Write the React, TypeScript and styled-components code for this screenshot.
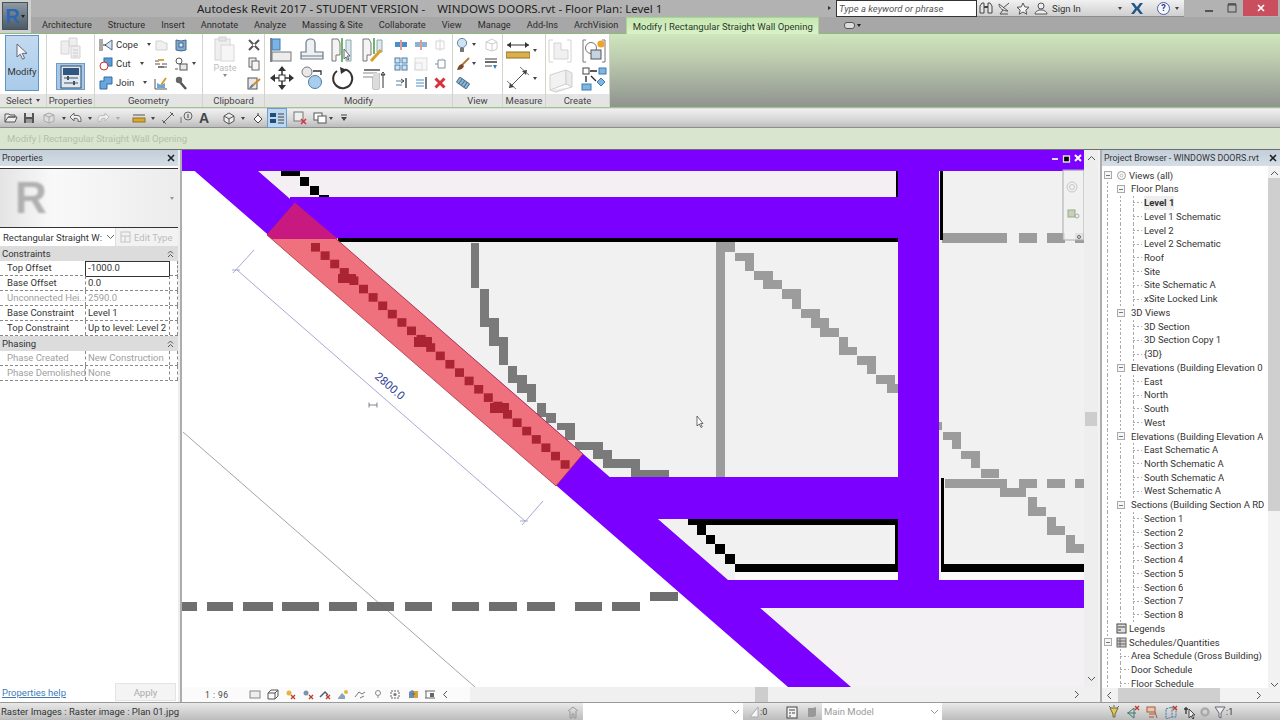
import React, { ReactNode } from "react";
import styled, { createGlobalStyle } from "styled-components";

const FONT = `Roboto, "Liberation Sans", sans-serif`;

const GlobalStyle = createGlobalStyle`
    html, body {
        margin: 0;
        padding: 0;
        background: #fff;
    }
    * { box-sizing: border-box; }
`;

const SvgBase = styled.svg`
    display: block;
    flex: none;
`;

const I = ({ w = 14, h = 14, children }: { w?: number; h?: number; children: ReactNode }) => (
    <SvgBase width={w} height={h} viewBox={`0 0 ${w} ${h}`} fill="none">
        {children}
    </SvgBase>
);

// ribbon icons
const IcoCursor = () => (
    <I w={14} h={18}><path d="M2 1v13l3.2-2.8 2.4 5 2-1-2.4-4.8H12z" fill="#f4f6f8" stroke="#667" /></I>
);
const IcoTypeFaded = () => (
    <I w={24} h={24}>
        <path d="M2 5h8v13H2zM10 2h8v8h-8zM12 10h9v12h-9z" fill="#eee" stroke="#d4d4d4" />
        <path d="M14 14h5M14 17h5M14 20h5" stroke="#ccc" />
    </I>
);
const IcoTypeProps = () => (
    <I w={22} h={24}>
        <rect x="1" y="1" width="20" height="22" fill="#dfe8f0" stroke="#2c4a66" />
        <rect x="3" y="3" width="16" height="7" fill="#31577f" />
        <path d="M4 13h14M4 18h14" stroke="#44525e" />
        <path d="M8 11v4M14 16v4" stroke="#44525e" strokeWidth="2" />
    </I>
);
const IcoCope = () => (
    <I w={14} h={14}>
        <path d="M1 1v12M3 1v12" stroke="#555" />
        <path d="M6 7l7-5v10z" fill="#dbe4ee" stroke="#4a6a8a" />
        <path d="M4 7h3" stroke="#333" />
    </I>
);
const IcoCut = () => (
    <I w={14} h={14}>
        <rect x="5" y="1" width="8" height="8" fill="#5c9bd6" stroke="#2f6da8" />
        <circle cx="5" cy="9" r="4" fill="#fff" stroke="#c0392b" />
    </I>
);
const IcoJoin = () => (
    <I w={14} h={14}>
        <path d="M5 1h8v7H8v5H1V5h4z" fill="#6aa5dd" stroke="#2f6da8" />
    </I>
);
const IcoFadedDoc = () => (
    <I w={14} h={14}><path d="M2 3h6l2 2h3v7H2z" fill="#f0f0f0" stroke="#d0d0d0" /></I>
);
const IcoBlueBook = () => (
    <I w={14} h={14}>
        <path d="M2 2l5 1 5-1v10l-5 1-5-1z" fill="#7fa9cf" stroke="#44688c" />
        <rect x="5" y="5" width="4" height="4" fill="#dde8f2" stroke="#44688c" />
    </I>
);
const IcoSplit = () => (
    <I w={14} h={14}>
        <path d="M1 4h4M1 7h5M8 7h5M9 10h4" stroke="#555" />
        <rect x="4" y="2" width="6" height="2" fill="#d4a83a" />
        <rect x="4" y="9" width="6" height="2" fill="#7a7a7a" />
    </I>
);
const IcoGeomPair = () => (
    <I w={14} h={14}>
        <circle cx="5" cy="4" r="3" stroke="#555" />
        <rect x="6" y="7" width="7" height="6" stroke="#555" fill="#e9e9e9" />
        <path d="M1 12h3" stroke="#555" />
    </I>
);
const IcoPaint = () => (
    <I w={14} h={14}>
        <path d="M1 13V3M1 13h12" stroke="#555" />
        <path d="M3 12V7l4 2 4-2v5z" fill="#6aa5dd" />
        <path d="M7 9l5-7" stroke="#d89a28" strokeWidth="2" />
    </I>
);
const IcoWand = () => (
    <I w={14} h={14}>
        <path d="M6 6l6 7" stroke="#555" strokeWidth="2.5" />
        <circle cx="5" cy="4" r="3.2" fill="#666" />
    </I>
);
const IcoClipFaded = () => (
    <I w={22} h={26}>
        <rect x="1" y="3" width="15" height="21" fill="#efefef" stroke="#d4d4d4" />
        <rect x="7" y="9" width="13" height="16" fill="#f6f6f6" stroke="#d8d8d8" />
        <rect x="5" y="1" width="7" height="4" fill="#e4e4e4" stroke="#d4d4d4" />
    </I>
);
const IcoScissors = () => (
    <I w={14} h={14}>
        <path d="M2 2l10 10M12 2L2 12" stroke="#555" strokeWidth="2" />
        <circle cx="7" cy="7" r="1.3" fill="#fff" />
    </I>
);
const IcoCopy = () => (
    <I w={14} h={14}>
        <rect x="2" y="1" width="7" height="9" fill="#eee" stroke="#666" />
        <rect x="5" y="4" width="7" height="9" fill="#f5f5f5" stroke="#666" />
    </I>
);
const IcoMatch = () => (
    <I w={14} h={14}>
        <rect x="1" y="2" width="9" height="11" fill="#e8e8e8" stroke="#555" />
        <path d="M5 10l8-7" stroke="#d18a23" strokeWidth="2" />
        <path d="M3 12l3-3" stroke="#5c7fa3" strokeWidth="2" />
    </I>
);
const IcoAlign = () => (
    <I w={24} h={26}>
        <path d="M2 1v24" stroke="#555" strokeWidth="1.4" />
        <rect x="3" y="2" width="8" height="11" fill="#7db3e3" stroke="#3f78b3" />
        <rect x="3" y="15" width="19" height="9" fill="#ececec" stroke="#777" />
    </I>
);
const IcoOffset = () => (
    <I w={24} h={24}>
        <path d="M1 21v-7h5V5a4 4 0 0 1 4-4h1a4 4 0 0 1 4 4v9h8v7z" stroke="#6f7b86" strokeWidth="1.2" fill="#edf1f4" />
        <path d="M1 18h22" stroke="#6f7b86" />
    </I>
);
const IcoMirrorPick = () => (
    <I w={22} h={26}>
        <path d="M1 2h6l2 4v12H5v6H1z" fill="#f4f4f4" stroke="#777" />
        <path d="M11 1v24" stroke="#4ba24b" strokeWidth="1.6" />
        <path d="M20 3h-5v21h5z" fill="#dfe7ef" stroke="#8aa" />
        <path d="M13 12v10l2-2 2 3 1-1-2-3h3z" fill="#fff" stroke="#667" />
    </I>
);
const IcoMirrorDraw = () => (
    <I w={22} h={26}>
        <path d="M1 2h6l2 4v12H5v6H1z" fill="#f4f4f4" stroke="#777" />
        <path d="M12 1v16" stroke="#4ba24b" strokeWidth="1.6" />
        <path d="M20 3h-5v12h5z" fill="#dfe7ef" stroke="#8aa" />
        <path d="M9 24l10-11" stroke="#d6a02a" strokeWidth="3" />
    </I>
);
const IcoMove = () => (
    <I w={26} h={26}>
        <path d="M13 1l4 5h-8zM13 25l4-5H9zM1 13l5-4v8zM25 13l-5-4v8z" fill="#333" />
        <path d="M13 6v14M6 13h14" stroke="#333" strokeWidth="1.5" />
        <rect x="10" y="10" width="6" height="6" fill="#fff" stroke="#333" />
    </I>
);
const IcoCopyMove = () => (
    <I w={24} h={24}>
        <circle cx="7" cy="6" r="5" fill="#e8e8e8" stroke="#777" />
        <circle cx="15" cy="16" r="6.5" fill="#a9cdec" stroke="#4a7ea8" />
        <path d="M13 5h8v4" stroke="#333" strokeWidth="1.3" />
    </I>
);
const IcoRotate = () => (
    <I w={24} h={24}>
        <path d="M14 3.4A9.5 9.5 0 1 1 6 5" stroke="#333" strokeWidth="2" />
        <path d="M9 1l7 3-6 4z" fill="#333" />
    </I>
);
const IcoTrim = () => (
    <I w={24} h={24}>
        <path d="M1 7h14M1 11h10v12h6V7" stroke="#8a8a8a" />
        <rect x="11" y="7" width="6" height="16" fill="#dcdcdc" />
        <path d="M2 4h16" stroke="#333" strokeWidth="1.3" />
        <path d="M21 22V8M21 6l-2 3h4z" stroke="#333" />
    </I>
);
const IcoTwin = ({ $c = "#4a90c8" }: { $c?: string }) => (
    <I w={14} h={14}>
        <path d="M7 2v10" stroke="#c0392b" />
        <rect x="1" y="4" width="5" height="5" fill={$c} />
        <rect x="8" y="4" width="5" height="5" fill={$c} />
    </I>
);
const IcoArray = () => (
    <I w={14} h={14}>
        <rect x="1" y="1" width="5" height="5" stroke="#4a7ea8" fill="#cfe2f3" />
        <rect x="8" y="1" width="5" height="5" stroke="#4a7ea8" fill="#cfe2f3" />
        <rect x="1" y="8" width="5" height="5" stroke="#4a7ea8" fill="#cfe2f3" />
        <rect x="8" y="8" width="5" height="5" stroke="#4a7ea8" fill="#cfe2f3" />
    </I>
);
const IcoScale = () => (
    <I w={14} h={14}>
        <rect x="1" y="1" width="12" height="12" stroke="#ddd" fill="#f7f7f7" />
        <rect x="1" y="6" width="7" height="7" stroke="#ddd" />
    </I>
);
const IcoTrimSmall = () => (
    <I w={14} h={14}>
        <path d="M12 2v10" stroke="#444" strokeWidth="1.4" />
        <path d="M2 5h8M2 9h6" stroke="#5a7f99" />
        <path d="M7 3l3 2-3 2" stroke="#444" />
    </I>
);
const IcoExtend = () => (
    <I w={14} h={14}>
        <path d="M12 1v12" stroke="#444" strokeWidth="1.4" />
        <path d="M2 4h8M2 7h8M2 10h8" stroke="#4a90c8" />
    </I>
);
const IcoUnpin = () => (
    <I w={14} h={14}>
        <path d="M2 7h3M5 3h7v8H5z" stroke="#7f8f9f" />
        <path d="M9 1v3" stroke="#ccc" />
    </I>
);
const IcoRedX = () => (
    <I w={14} h={14}><path d="M2.5 2.5l9 9M11.5 2.5l-9 9" stroke="#d6333f" strokeWidth="3" /></I>
);
const IcoFadedCross = () => (
    <I w={14} h={14}><path d="M3 3h8v8H3zM7 1v12" stroke="#d6d6d6" /></I>
);
const IcoBulb = () => (
    <I w={12} h={16}>
        <circle cx="6" cy="6" r="4.6" fill="#cfe2f3" stroke="#5f87a8" />
        <rect x="4" y="11" width="4" height="4" fill="#777" />
    </I>
);
const IcoBox3d = () => (
    <I w={14} h={14}><path d="M2 4l6-3 5 3v7l-5 2-6-2zM8 6v7M2 4l6 2 5-2" stroke="#ccc" /></I>
);
const IcoBrush = () => (
    <I w={14} h={14}>
        <path d="M6 8l7-7" stroke="#b37a3a" strokeWidth="2" />
        <path d="M1 13c1-4 3-6 5-6l2 2c-1 3-4 4-7 4z" fill="#7c4a2a" />
    </I>
);
const IcoLines = () => (
    <I w={14} h={14}>
        <path d="M1 2h12" stroke="#444" />
        <path d="M1 5h12" stroke="#444" strokeWidth="1.6" />
        <path d="M1 9h7" stroke="#444" />
        <path d="M9 8h4l-2 4z" fill="#2f7ec0" />
    </I>
);
const IcoBars = () => (
    <I w={14} h={14}>
        <g transform="rotate(35 7 7)">
            <rect x="1" y="4" width="12" height="6" rx="1" fill="#8cb8d9" stroke="#4b6f8c" />
            <path d="M4 4v6M7 4v6M10 4v6" stroke="#4b6f8c" />
        </g>
    </I>
);
const IcoRuler = () => (
    <I w={24} h={22}>
        <path d="M1 6h22" stroke="#333" />
        <path d="M1 6l4-3v6zM23 6l-4-3v6z" fill="#333" />
        <rect x="0" y="13" width="24" height="6" fill="#d9b04d" stroke="#8f7326" />
    </I>
);
const IcoDimDiag = () => (
    <I w={24} h={24}>
        <path d="M3 22L21 4" stroke="#555" />
        <path d="M14 1l9 8M1 15l9 8" stroke="#777" />
        <path d="M21 4l-5 1 4 4zM3 22l1-5 4 4z" fill="#444" />
    </I>
);
const IcoCreateFaded = () => (
    <I w={24} h={24}>
        <path d="M5 1H1v22h4M19 1h4v22h-4" stroke="#d4d4d4" />
        <path d="M6 4h7v7h7v9H6z" fill="#f0f0f0" stroke="#d4d4d4" />
    </I>
);
const IcoCreateGroup = () => (
    <I w={26} h={26}>
        <path d="M5 2H2v22h3M21 2h3v22h-3" stroke="#777" />
        <circle cx="10" cy="10" r="5.5" stroke="#777" fill="#fff" />
        <rect x="10" y="12" width="10" height="9" fill="#c4d4e2" stroke="#555" />
        <circle cx="20" cy="6" r="3.6" fill="#eea32a" />
    </I>
);
const IcoFolderBox = () => (
    <I w={26} h={26}>
        <path d="M2 8l16-5v14L2 23z" fill="#f2f2f2" stroke="#d0d0d0" />
        <path d="M18 3l6 3v14l-6-3zM2 23l6 2 16-5" fill="#eaeaea" stroke="#d0d0d0" />
    </I>
);
const IcoFlow = () => (
    <I w={26} h={26}>
        <rect x="2" y="1" width="6" height="6" fill="#fff" stroke="#444" />
        <rect x="18" y="1" width="7" height="6" fill="#7fb6de" stroke="#3f78b3" />
        <path d="M9 4h7M5 9v6M10 9l5 5" stroke="#222" strokeWidth="1.3" />
        <rect x="1" y="17" width="9" height="6" fill="#7fb6de" stroke="#3f78b3" />
        <path d="M20 11l4 4-4 4-4-4z" fill="#7fb6de" stroke="#3f78b3" />
    </I>
);

// quick access icons
const IcoOpen = () => (
    <I w={14} h={12}><path d="M1 10V2h4l1 1h5v2H4l-3 5h10l2-5H4" stroke="#555" fill="#eee" /></I>
);
const IcoSave = () => (
    <I w={12} h={12}>
        <rect x="1" y="1" width="10" height="10" fill="#555" />
        <rect x="3" y="1" width="6" height="4" fill="#ddd" />
        <rect x="3" y="7" width="6" height="4" fill="#999" />
    </I>
);
const IcoSync = () => (
    <I w={14} h={12}><path d="M2 3l5-2 5 2v6l-5 2-5-2zM2 3l5 2 5-2M7 5v6" stroke="#aaa" fill="#ddd" /></I>
);
const IcoUndo = ({ $c = "#666", flip = false }: { $c?: string; flip?: boolean }) => (
    <I w={14} h={12}>
        <g transform={flip ? "matrix(-1 0 0 1 14 0)" : undefined}>
            <path d="M2 5l4-4v2.4h3c3 0 4 2 4 5v1h-3V8c0-1-.5-1.6-2-1.6H6V9z" stroke={$c} fill="#eee" />
        </g>
    </I>
);
const IcoMeasureBar = () => (
    <I w={14} h={12}>
        <path d="M1 3h12" stroke="#555" />
        <rect x="1" y="6" width="12" height="4" fill="#d9a92a" stroke="#8f7326" />
    </I>
);
const IcoDimSmall = () => (
    <I w={14} h={14}><path d="M2 12L12 2" stroke="#555" /><path d="M9 1l4 4M1 9l4 4" stroke="#666" /></I>
);
const IcoTag = () => (
    <I w={14} h={14}>
        <path d="M2 12V6" stroke="#777" />
        <circle cx="9" cy="5" r="4" stroke="#666" />
        <path d="M9 3v4" stroke="#444" />
    </I>
);
const IcoCube = () => (
    <I w={14} h={13}><path d="M7 1l5 3v5l-5 3-5-3V4zM2 4l5 3 5-3M7 7v5" stroke="#555" fill="#f0f0f0" /></I>
);
const IcoDiamond = () => (
    <I w={14} h={13}><path d="M7 3l4 4-4 4-4-4z" stroke="#444" fill="#fff" /><path d="M7 1v3" stroke="#444" /></I>
);
const IcoSwitch = () => (
    <I w={16} h={13}>
        <rect x="1" y="1" width="6" height="4" fill="#1f4e79" />
        <rect x="1" y="7" width="6" height="4" fill="#1f4e79" />
        <path d="M9 2h6M9 5h6M9 8h6M9 11h6" stroke="#444" />
    </I>
);
const IcoCloseWin = () => (
    <I w={14} h={14}>
        <rect x="1" y="1" width="9" height="9" stroke="#777" fill="#eee" />
        <path d="M8 8l5 5M13 8l-5 5" stroke="#d6333f" strokeWidth="1.5" />
    </I>
);
const IcoTileWin = () => (
    <I w={14} h={12}>
        <rect x="1" y="1" width="8" height="7" stroke="#555" fill="#fff" />
        <rect x="5" y="4" width="8" height="7" stroke="#555" fill="#fff" />
    </I>
);
const IcoQatMenu = () => (
    <I w={8} h={10}><path d="M1 2h6" stroke="#444" /><path d="M1 4h6l-3 4z" fill="#444" /></I>
);

// info center icons
const IcoBinoc = () => (
    <I w={14} h={13}>
        <path d="M1 11V4l2-3h2v10zM13 11V4l-2-3H9v10z" fill="#e6e6e6" stroke="#444" />
        <path d="M5 5h4" stroke="#444" strokeWidth="2" />
    </I>
);
const IcoDish = () => (
    <I w={14} h={13}>
        <path d="M2 2c0 4 4 7 9 7z" fill="#eee" stroke="#555" />
        <path d="M6 8l-3 4h8M6 6l6-5" stroke="#555" />
    </I>
);
const IcoStar = () => (
    <I w={14} h={13}><path d="M7 1l1.8 3.9 4.2.4-3.2 2.8 1 4.1L7 10l-3.8 2.2 1-4.1L1 5.3l4.2-.4z" stroke="#555" fill="#f5f5f5" /></I>
);
const IcoUser = () => (
    <I w={14} h={13}>
        <circle cx="7" cy="4" r="3" stroke="#555" fill="#eee" />
        <path d="M1 12h12c0-2-2-3-4-4H5c-2 1-4 2-4 4z" stroke="#555" fill="#eee" />
    </I>
);
const IcoExchange = () => (
    <I w={14} h={13}>
        <path d="M1 1h3l3 4 3-4h3L9 6.5 13 12h-3L7 8l-3 4H1l4-5.500z" fill="#23578a" />
    </I>
);
const IcoHelp = () => (
    <HelpCircle>?</HelpCircle>
);

const IcoMin = () => (
    <I w={12} h={12}><path d="M2 9h8" stroke="#333" strokeWidth="1.5" /></I>
);
const IcoRestore = () => (
    <I w={12} h={12}>
        <rect x="2" y="3" width="8" height="7" stroke="#444" />
        <path d="M2 2h8" stroke="#444" strokeWidth="1.5" />
    </I>
);
const IcoCloseWhite = () => (
    <I w={12} h={12}><path d="M3 3l6 6M9 3l-6 6" stroke="#fff" strokeWidth="1.6" /></I>
);
const IcoPanelX = () => (
    <I w={10} h={10}><path d="M2 2l6 6M8 2l-6 6" stroke="#222" strokeWidth="1.6" /></I>
);
const IcoChevDown = ({ $c = "#666" }: { $c?: string }) => (
    <I w={9} h={6}><path d="M1 1l3.500 3.500L8 1" stroke={$c} /></I>
);
const IcoChevUp = ({ $c = "#555" }: { $c?: string }) => (
    <I w={9} h={6}><path d="M1 5l3.500-3.500L8 5" stroke={$c} /></I>
);
const IcoChevLeft = () => (
    <I w={6} h={9}><path d="M5 1L1.500 4.500 5 8" stroke="#555" /></I>
);
const IcoChevRight = () => (
    <I w={6} h={9}><path d="M1 1l3.500 3.500L1 8" stroke="#555" /></I>
);
const IcoEditType = () => (
    <I w={11} h={12}>
        <rect x="1" y="1" width="9" height="10" stroke="#c4c4c4" />
        <path d="M1 5h9M5 5v6" stroke="#c4c4c4" />
    </I>
);
const IcoDoubleUp = () => (
    <I w={7} h={8}><path d="M1 3.500l2.500-2.500L6 3.500M1 7l2.500-2.500L6 7" stroke="#555" /></I>
);
const IcoViewsTree = () => (
    <I w={11} h={11}>
        <circle cx="5.500" cy="5.500" r="4" stroke="#999" />
        <circle cx="5.500" cy="5.500" r="1.500" stroke="#bbb" />
    </I>
);
const IcoLegend = () => (
    <I w={11} h={11}>
        <rect x="1" y="1" width="9" height="9" fill="#ddd" stroke="#444" />
        <path d="M2 4h7M2 7h3" stroke="#444" />
    </I>
);
const IcoSchedule = () => (
    <I w={11} h={11}>
        <rect x="1" y="1" width="9" height="9" fill="#ccc" stroke="#666" />
        <path d="M1 4h9M1 7h9M4 1v9" stroke="#666" />
    </I>
);

// small icons of the view bar and status bar, one per item
const MiniRect = () => <I w={12} h={11}><rect x="1" y="2" width="10" height="7" fill="#eee" stroke="#888" /></I>;
const MiniBox = () => <I w={12} h={11}><path d="M1 4h7v6H1zM1 4l3-3h7v6l-3 3M8 4l3-3" stroke="#555" /></I>;
const MiniSunX = () => (
    <I w={12} h={11}>
        <circle cx="5" cy="4" r="2.500" fill="#e5b53a" />
        <path d="M7 6l4 4M11 6l-4 4" stroke="#c0392b" strokeWidth="1.3" />
    </I>
);
const MiniShadowX = () => (
    <I w={12} h={11}>
        <circle cx="4" cy="4" r="2.500" fill="#7a94ab" />
        <path d="M7 6l4 4M11 6l-4 4" stroke="#c0392b" strokeWidth="1.3" />
    </I>
);
const MiniHouseX = () => (
    <I w={12} h={11}>
        <path d="M1 8l5-5 3 3" stroke="#49637b" strokeWidth="1.5" />
        <path d="M7 6l4 4M11 6l-4 4" stroke="#c0392b" strokeWidth="1.3" />
    </I>
);
const MiniHouseSun = () => (
    <I w={12} h={11}>
        <path d="M1 9l4-5 3 3v3H1z" fill="#8aa3b8" />
        <circle cx="9" cy="3" r="2" fill="#e5b53a" />
    </I>
);
const MiniCrop = () => <I w={12} h={11}><path d="M1 8l4-5 3 2 3-2M6 9l4-2" stroke="#777" /></I>;
const MiniBulb = () => <I w={12} h={11}><circle cx="6" cy="4" r="2.500" stroke="#888" /><path d="M5 8h2" stroke="#888" /></I>;
const MiniCropBox = () => (
    <I w={12} h={11}>
        <rect x="2" y="2" width="8" height="7" stroke="#666" strokeDasharray="2 1" />
        <circle cx="6" cy="5.500" r="1.600" fill="#777" />
    </I>
);
const MiniGlasses = () => (
    <I w={12} h={11}>
        <path d="M2 9V3l3-2 2 1v7z" fill="#6a8fae" />
        <rect x="7" y="2" width="4" height="7" fill="#d8a23a" />
        <path d="M5 5h3" stroke="#c0392b" />
    </I>
);
const MiniAnalyze = () => (
    <I w={12} h={11}>
        <path d="M1 2h10M1 9h10M2 2v7" stroke="#666" />
        <rect x="6" y="4" width="4" height="4" fill="#666" />
    </I>
);
const MiniHouse = () => <I w={12} h={14}><path d="M1 6l5-4 5 4M3 6v7h2V9h2v4h2V6" stroke="#999" /></I>;
const MiniFilterBox = () => <I w={12} h={14}><path d="M2 12L10 2v10z" fill="#f6f6f6" stroke="#aaa" /></I>;
const MiniDoc = () => (
    <I w={12} h={14}>
        <rect x="1" y="2" width="10" height="11" fill="#f2f2f2" stroke="#444" />
        <path d="M3 5h6M3 8h2M6 8h3M3 11h2" stroke="#444" />
    </I>
);
const MiniGrey = () => (
    <I w={12} h={14}><path d="M2 3h5v9H2zM7 3l3-1v9l-3 1z" fill="#999" /></I>
);
const StatusBulb = () => (
    <I w={12} h={14}>
        <path d="M2 3h8l-3 6v3H5V9z" fill="#e4c95a" stroke="#6a6a3a" />
        <path d="M1 1l2 2M11 1L9 3M6 0v2" stroke="#666" />
    </I>
);
const StatusLinkX = () => (
    <I w={14} h={14}>
        <path d="M2 8l6-5M2 8l6 5M1 8h9M8 3v10" stroke="#3a7a72" />
        <path d="M9 1l4 4M13 1L9 5" stroke="#c0392b" strokeWidth="1.3" />
    </I>
);
const StatusPin = () => (
    <I w={14} h={14}>
        <rect x="2" y="2" width="8" height="5" fill="#e6c8a8" stroke="#a85a3a" />
        <path d="M4 9h6M4 12h5M10 7l2 6" stroke="#a85a3a" />
    </I>
);
const StatusFaceX = () => (
    <I w={14} h={14}>
        <path d="M2 4l6-2v10l-6 2zM8 2l4 2v8l-4-0" stroke="#3a7a9a" strokeDasharray="2 1" />
        <path d="M9 1l4 4M13 1L9 5" stroke="#c0392b" strokeWidth="1.3" />
    </I>
);
const StatusDrag = () => (
    <I w={14} h={14}>
        <path d="M3 2v7M1 4h4" stroke="#333" strokeWidth="1.3" />
        <path d="M6 4v9l2-2 2 3 1-1-2-3h3z" stroke="#444" fill="#eee" />
    </I>
);
const StatusGear = () => <I w={12} h={12}><circle cx="6" cy="6" r="3.500" stroke="#aaa" strokeWidth="2.500" /></I>;
const StatusFilter = () => <I w={12} h={14}><path d="M1 2h10L7 8v5l-2-1V8z" stroke="#667" fill="#eee" /></I>;

// ----- page chrome

const Page = styled.div`
    width: 1280px;
    height: 720px;
    overflow: hidden;
    display: flex;
    flex-direction: column;
    background: #fff;
    font-family: ${FONT};
    color: #333;
    font-size: 9.5px;
`;

const TopBar = styled.div`
    display: flex;
    height: 34px;
    background: #a7a7a7;
    border-bottom: 1px solid #8fb97a;
`;

const AppButton = styled.div`
    width: 31px;
    height: 33px;
    background: #cfcfcf;
    padding: 2px 3px 3px 2px;
    flex: none;
`;

const AppButtonFace = styled.div`
    height: 100%;
    background: linear-gradient(#8d99a3, #4b5a66);
    border: 1px solid #46525c;
    display: flex;
    align-items: center;
    justify-content: center;
    gap: 1px;
`;

const AppLetter = styled.span`
    font-family: "Liberation Sans", sans-serif;
    font-weight: 700;
    font-size: 20px;
    color: #2d66b5;
`;

const TitleColumn = styled.div`
    flex: 1;
    display: flex;
    flex-direction: column;
`;

const TitleRow = styled.div`
    height: 17px;
    display: flex;
    background: #b2b2b2;
`;

const TitleText = styled.div`
    width: 797px;
    padding-left: 166px;
    padding-top: 1px;
    font-family: "Noto Sans", sans-serif;
    font-size: 11.5px;
    line-height: 15px;
    color: #222;
    white-space: pre;
    overflow: hidden;
`;

const SearchArrow = styled.div`
    width: 8px;
    padding-top: 6px;
    &::before {
        content: "";
        display: block;
        border-left: 3px solid #333;
        border-top: 2.500px solid transparent;
        border-bottom: 2.500px solid transparent;
        width: 0;
    }
`;

const SearchBox = styled.div`
    width: 141px;
    height: 17px;
    background: #fff;
    border: 1px solid #333;
    padding-left: 2px;
    font-style: italic;
    font-size: 9.5px;
    line-height: 15px;
    color: #555;
`;

const InfoCenter = styled.div`
    width: 207px;
    height: 17px;
    display: flex;
    align-items: center;
    background: linear-gradient(#f1f1f1, #cfcfcf);
    border-bottom: 1px solid #8c8c8c;
    padding-left: 2px;
`;

const InfoSlot = styled.span<{ $w: number }>`
    display: flex;
    align-items: center;
    width: ${(p) => p.$w}px;
    flex: none;
`;

const HelpCircle = styled.span`
    width: 13px;
    height: 13px;
    border: 1.500px solid #4a5fa8;
    border-radius: 50%;
    display: flex;
    align-items: center;
    justify-content: center;
    color: #2b3f96;
    font-weight: 700;
    font-size: 9px;
    background: #f6f6ff;
`;

const WindowButtons = styled.div`
    flex: 1;
    display: flex;
    justify-content: flex-end;
    align-items: flex-start;
    padding-right: 2px;
`;

const WindowBtn = styled.div<{ $w: number; $danger?: boolean }>`
    width: ${(p) => p.$w}px;
    height: 16px;
    display: flex;
    align-items: center;
    justify-content: center;
    background: ${(p) => (p.$danger ? "#c94f5e" : "transparent")};
`;

const TabRow = styled.div`
    height: 16px;
    display: flex;
    align-items: center;
    padding-left: 11px;
    gap: 16px;
    background: #a7a7a7;
`;

const Tab = styled.span`
    line-height: 16px;
    font-size: 9.2px;
    color: #2c2c2c;
    white-space: nowrap;
`;

const ActiveTab = styled.span`
    margin-left: -8px;
    width: 193px;
    height: 17px;
    padding: 2px 0 0;
    text-align: center;
    line-height: 13px;
    font-size: 9.5px;
    color: #2a3a24;
    white-space: nowrap;
    background: linear-gradient(#c5e8b2, #dbf1ca);
    border: 1px solid #a7d890;
    border-bottom: none;
`;

const ContextCollapse = styled.span`
    margin-left: 9px;
    display: flex;
    align-items: center;
    gap: 2px;
`;

const PillIcon = styled.span`
    width: 11px;
    height: 7px;
    border: 1px solid #555;
    border-radius: 3px;
    background: #ddd;
`;

const Caret = styled.span<{ $m?: number; $c?: string }>`
    display: inline-block;
    flex: none;
    width: 0;
    height: 0;
    margin-left: ${(p) => p.$m ?? 0}px;
    border-top: 3px solid ${(p) => p.$c ?? "#444"};
    border-left: 2.500px solid transparent;
    border-right: 2.500px solid transparent;
`;

// ----- ribbon

const Ribbon = styled.div`
    height: 74px;
    display: flex;
    background: linear-gradient(#cfe6bd, #bccbae 35%, #8f938f);
    border-bottom: 1px solid #9fc48c;
`;

const Panel = styled.div<{ $w: number }>`
    width: ${(p) => p.$w}px;
    flex: none;
    display: flex;
    flex-direction: column;
    background: #fff;
    border-right: 1px solid #cfd6c9;
`;

const PanelBody = styled.div`
    height: 60px;
    display: flex;
`;

const PanelLabel = styled.div`
    flex: 1;
    display: flex;
    align-items: center;
    justify-content: center;
    gap: 4px;
    background: #e4e4e4;
    color: #444;
    font-size: 9.5px;
`;

const ModifyButton = styled.div`
    margin: 1px 0 0 5px;
    width: 34px;
    height: 56px;
    background: linear-gradient(#c2daf0, #a9cbea);
    border: 1px solid #5f95c4;
    display: flex;
    flex-direction: column;
    align-items: center;
    padding-top: 7px;
    gap: 5px;
    color: #333;
    font-size: 9.5px;
`;

const PropsStack = styled.div`
    width: 100%;
    display: flex;
    flex-direction: column;
    align-items: center;
    padding-top: 2px;
    gap: 3px;
`;

const SelectedTool = styled.div`
    width: 29px;
    height: 27px;
    display: flex;
    align-items: center;
    justify-content: center;
    background: #a7c8e8;
    border: 1px solid #6d9cc8;
`;

const ToolGrid = styled.div<{ $cols: string; $pl: number; $pt?: number; $rows?: string }>`
    display: grid;
    grid-template-columns: ${(p) => p.$cols};
    grid-auto-rows: ${(p) => p.$rows ?? "19px"};
    padding: ${(p) => p.$pt ?? 1}px 0 0 ${(p) => p.$pl}px;
    align-items: center;
`;

const ToolCell = styled.div<{ $gap?: number }>`
    display: flex;
    align-items: center;
    gap: ${(p) => p.$gap ?? 3}px;
    font-size: 9.5px;
    color: #333;
    min-width: 0;
`;

const PasteStack = styled.div`
    width: 44px;
    padding-top: 2px;
    display: flex;
    flex-direction: column;
    align-items: center;
    gap: 1px;
    color: #bdbdbd;
    font-size: 9px;
`;

const SmallColumn = styled.div`
    padding-top: 1px;
    display: flex;
    flex-direction: column;
`;

const SmallSlot = styled.div`
    height: 19px;
    display: flex;
    align-items: center;
`;

const Divider = styled.span`
    width: 1px;
`;

// ----- quick access, options bar

const Qat = styled.div`
    height: 20px;
    display: flex;
    align-items: center;
    padding-left: 4px;
    background: linear-gradient(#f0f0f0, #d6d6d6 60%, #bdbdbd);
    border-top: 1px solid #dcdcdc;
    border-bottom: 1px solid #8e8e8e;
`;

const QatSlot = styled.span<{ $w: number }>`
    width: ${(p) => p.$w}px;
    flex: none;
    height: 18px;
    display: flex;
    align-items: center;
`;

const QatToggle = styled.span`
    width: 18px;
    height: 18px;
    display: flex;
    align-items: center;
    justify-content: center;
    background: #bcd6ef;
    outline: 1px solid #6d9cc8;
`;

const QatA = styled.span`
    font-family: "Liberation Sans", sans-serif;
    font-weight: 700;
    font-size: 14px;
    color: #444;
`;

const OptionsBar = styled.div`
    height: 22px;
    display: flex;
    align-items: center;
    padding-left: 7px;
    background: #d9e5cf;
    border-bottom: 1px solid #6e6a78;
    color: #b4c0ac;
    font-size: 9.5px;
`;

// ----- main

const Main = styled.div`
    height: 552px;
    display: flex;
`;

const SidePanel = styled.div`
    width: 178px;
    flex: none;
    display: flex;
    flex-direction: column;
    background: #fff;
`;

const PanelTitle = styled.div`
    height: 16px;
    flex: none;
    display: flex;
    align-items: center;
    justify-content: space-between;
    padding: 0 2px 1px;
    background: linear-gradient(#c3ced9, #d5dee6);
    font-size: 8.9px;
    color: #333;
    white-space: nowrap;
`;

const Gutter = styled.div`
    width: 4px;
    flex: none;
    background: #eee;
    border-right: 2px solid #adadad;
`;

const BrowserGutter = styled.div`
    width: 4px;
    flex: none;
    background: #f2f2f2;
    border-right: 2px solid #adadad;
`;

const Preview = styled.div`
    height: 60px;
    margin-top: 2px;
    display: flex;
    align-items: center;
    justify-content: space-between;
    padding: 0 4px 0 15px;
    border-top: 1px solid #333;
    border-bottom: 1px solid #333;
    background: linear-gradient(90deg, #e4e4e4, #f9f9f9 30%, #ececec);
`;

const PreviewLogo = styled.span`
    font-family: "Liberation Sans", sans-serif;
    font-weight: 700;
    font-size: 44px;
    color: #b0b0b0;
    filter: blur(0.8px);
`;

const TypeRow = styled.div`
    height: 18px;
    display: flex;
    align-items: center;
    background: #fff;
`;

const TypeSelect = styled.div`
    width: 116px;
    height: 18px;
    display: flex;
    align-items: center;
    padding-left: 3px;
    border-right: 1px solid #ddd;
`;

const TypeName = styled.span`
    width: 103px;
    white-space: nowrap;
    color: #333;
`;

const EditType = styled.div`
    flex: 1;
    height: 18px;
    display: flex;
    align-items: center;
    gap: 3px;
    padding-left: 4px;
    background: #f2f2f2;
    color: #bcbcbc;
`;

const GroupHeader = styled.div`
    height: 15px;
    display: flex;
    align-items: center;
    justify-content: space-between;
    padding: 0 4px 0 2px;
    background: #dcdcdc;
    color: #333;
`;

const PropRow = styled.div`
    height: 15px;
    display: grid;
    grid-template-columns: 85px 85px 8px;
    border-bottom: 1px dashed #888;
`;

const PropName = styled.span<{ $muted?: boolean }>`
    padding-left: 7px;
    line-height: 14px;
    white-space: nowrap;
    color: ${(p) => (p.$muted ? "#a0a0a0" : "#333")};
`;

const PropValue = styled.span<{ $muted?: boolean; $active?: boolean }>`
    padding-left: 2px;
    line-height: 14px;
    white-space: nowrap;
    border-left: 1px dashed #888;
    border-right: 1px dashed #888;
    color: ${(p) => (p.$muted ? "#a0a0a0" : "#333")};
    ${(p) => p.$active && "border: 1px solid #333; line-height: 12px; height: 16px; background: #fff;"}
`;

const PropEdge = styled.span`
    border-right: 1px dashed #888;
`;

const SidePanelSpacer = styled.div`
    flex: 1;
`;

const HelpRow = styled.div`
    height: 20px;
    display: flex;
    align-items: center;
    justify-content: space-between;
    padding: 0 2px;
`;

const HelpLink = styled.a`
    color: #3d7bb8;
    text-decoration: underline;
`;

const ApplyButton = styled.div`
    width: 61px;
    height: 18px;
    display: flex;
    align-items: center;
    justify-content: center;
    background: #f4f4f4;
    border: 1px solid #e4e4e4;
    color: #aaa;
`;

// ----- canvas column

const CanvasColumn = styled.div`
    width: 916px;
    flex: none;
    display: flex;
    flex-direction: column;
`;

const CanvasRow = styled.div`
    height: 537px;
    display: flex;
`;

const Drawing = styled.div`
    width: 902px;
    height: 537px;
    position: relative;
    overflow: hidden;
`;

const DrawingSvg = styled.svg`
    display: block;
`;

const ScrollTrack = styled.div`
    width: 14px;
    flex: none;
    display: flex;
    flex-direction: column;
    align-items: center;
    padding: 5px 0;
    background: #eeeeee;
`;

const ScrollThumbV = styled.div`
    width: 12px;
    height: 14px;
    margin-top: 251px;
    margin-bottom: auto;
    background: #cdcdcd;
`;

const ViewBar = styled.div`
    height: 15px;
    display: flex;
    align-items: center;
    background: #f0f0f0;
`;

const ViewControls = styled.div`
    width: 288px;
    height: 15px;
    display: flex;
    align-items: center;
    flex: none;
    background: #fbfbfb;
    padding-left: 23px;
`;

const ViewScale = styled.span`
    width: 44px;
    font-size: 8.5px;
    letter-spacing: 0.5px;
    color: #444;
`;

const ViewIcon = styled.span`
    width: 17.500px;
    flex: none;
`;

const HScrollTrack = styled.div`
    flex: 1;
    display: flex;
    align-items: center;
    justify-content: space-between;
    padding-right: 18px;
`;

const HThumb = styled.div`
    width: 13px;
    height: 15px;
    margin-left: 285px;
    background: #cdcdcd;
`;

// ----- project browser

const Tree = styled.div`
    flex: 1;
    min-height: 0;
    display: flex;
`;

const TreeList = styled.div`
    flex: 1;
    height: 522px;
    padding: 2.600px 0 0 1px;
    overflow: hidden;
`;

const TreeRow = styled.div`
    height: 13.740px;
    display: flex;
    align-items: stretch;
`;

const GuideCell = styled.span<{ $line: string; $elbow?: boolean }>`
    width: 13px;
    flex: none;
    background-image:
        repeating-linear-gradient(#aaa 0 2px, transparent 2px 4px),
        ${(p) => (p.$elbow ? "repeating-linear-gradient(90deg, #aaa 0 2px, transparent 2px 4px)" : "none")};
    background-size: 1px 100%, 9px 1px;
    background-position: ${(p) => p.$line} 0, ${(p) => p.$line} 50%;
    background-repeat: no-repeat;
`;

const ExpanderCell = styled.span`
    width: 13px;
    flex: none;
    display: flex;
    align-items: center;
`;

const Expander = styled.span<{ $ml: number }>`
    width: 8px;
    height: 8px;
    margin-left: ${(p) => p.$ml}px;
    border: 1px solid #aaa;
    display: flex;
    align-items: center;
    justify-content: center;
    background: #f6f6f6;
    &::after {
        content: "";
        width: 4px;
        height: 1px;
        background: #777;
    }
`;

const TreeIconCell = styled.span`
    width: 13px;
    flex: none;
    display: flex;
    align-items: center;
`;

const TreeLabel = styled.span<{ $active?: boolean; $ml?: number }>`
    margin-left: ${(p) => p.$ml ?? 0}px;
    font-size: 9.5px;
    line-height: 13.740px;
    font-weight: ${(p) => (p.$active ? 700 : 400)};
    background: ${(p) => (p.$active ? "#eee" : "transparent")};
    color: #333;
    white-space: nowrap;
    overflow: hidden;
    max-width: 134px;
`;

const BrowserScroll = styled.div`
    width: 12px;
    flex: none;
    display: flex;
    flex-direction: column;
    align-items: center;
    background: #f2f2f2;
    padding-top: 4px;
`;

const BrowserThumb = styled.div`
    width: 12px;
    height: 333px;
    margin-top: 2px;
    margin-bottom: auto;
    background: #cfcfcf;
`;

const BrowserHScroll = styled.div`
    height: 14px;
    flex: none;
    display: flex;
    align-items: center;
    padding: 0 15px 0 4px;
    background: #f2f2f2;
`;

const BrowserHThumb = styled.div`
    width: 102px;
    height: 14px;
    margin-left: 6px;
    margin-right: 36px;
    background: #cfcfcf;
`;

// ----- status bar

const StatusBar = styled.div`
    height: 18px;
    display: flex;
    align-items: center;
    background: linear-gradient(#e9e9e9, #bcbcbc);
    border-top: 1px solid #9a9a9a;
    padding-left: 1px;
    font-size: 9.5px;
`;

const StatusText = styled.span`
    width: 566px;
    color: #333;
`;

const StatusSlot = styled.span<{ $w: number }>`
    width: ${(p) => p.$w}px;
    flex: none;
    display: flex;
    align-items: center;
`;

const StatusCombo = styled.div<{ $w: number }>`
    width: ${(p) => p.$w}px;
    height: 17px;
    flex: none;
    align-self: flex-end;
    display: flex;
    align-items: center;
    justify-content: space-between;
    padding: 0 3px 0 2px;
    background: #fff;
    color: #9a9a9a;
`;

const CountLabel = styled.span`
    color: #333;
    font-size: 9px;
`;

// ----- data

type ToolbarSlot = { w: number; node: ReactNode };

const QAT_ITEMS: ToolbarSlot[] = [
    { w: 19, node: <IcoOpen /> },
    { w: 19, node: <IcoSave /> },
    { w: 20, node: <IcoSync /> },
    { w: 6, node: <Caret /> },
    { w: 20, node: <IcoUndo /> },
    { w: 9, node: <Caret /> },
    { w: 19, node: <IcoUndo flip $c="#bbb" /> },
    { w: 16, node: <Caret $c="#aaa" /> },
    { w: 19, node: <IcoMeasureBar /> },
    { w: 10, node: <Caret /> },
    { w: 18, node: <IcoDimSmall /> },
    { w: 20, node: <IcoTag /> },
    { w: 23, node: <QatA>A</QatA> },
    { w: 19, node: <IcoCube /> },
    { w: 10, node: <Caret /> },
    { w: 17, node: <IcoDiamond /> },
    { w: 25, node: <QatToggle><IcoSwitch /></QatToggle> },
    { w: 20, node: <IcoCloseWin /> },
    { w: 16, node: <IcoTileWin /> },
    { w: 11, node: <Caret /> },
    { w: 10, node: <IcoQatMenu /> },
];

const VIEW_ICONS = [
    <MiniRect key="a" />, <MiniBox key="b" />, <MiniSunX key="c" />, <MiniShadowX key="d" />,
    <MiniHouseX key="e" />, <MiniHouseSun key="f" />, <MiniCrop key="g" />, <MiniBulb key="h" />,
    <MiniCropBox key="i" />, <MiniGlasses key="j" />, <MiniAnalyze key="k" />,
];

type TreeItem = { label: string; kind: "root" | "legend" | "schedule" | "group" | "view" | "leaf"; active?: boolean };

const views = (...labels: string[]): TreeItem[] => labels.map((label) => ({ label, kind: "view" }));

const TREE: TreeItem[] = [
    { label: "Views (all)", kind: "root" },
    { label: "Floor Plans", kind: "group" },
    { label: "Level 1", kind: "view", active: true },
    ...views("Level 1 Schematic", "Level 2", "Level 2 Schematic", "Roof", "Site", "Site Schematic A", "xSite Locked Link"),
    { label: "3D Views", kind: "group" },
    ...views("3D Section", "3D Section Copy 1", "{3D}"),
    { label: "Elevations (Building Elevation 0", kind: "group" },
    ...views("East", "North", "South", "West"),
    { label: "Elevations (Building Elevation A", kind: "group" },
    ...views("East Schematic A", "North Schematic A", "South Schematic A", "West Schematic A"),
    { label: "Sections (Building Section A RD", kind: "group" },
    ...views("Section 1", "Section 2", "Section 3", "Section 4", "Section 5", "Section 6", "Section 7", "Section 8"),
    { label: "Legends", kind: "legend" },
    { label: "Schedules/Quantities", kind: "schedule" },
    { label: "Area Schedule (Gross Building)", kind: "leaf" },
    { label: "Door Schedule", kind: "leaf" },
    { label: "Floor Schedule", kind: "leaf" },
];

const TreeNode = ({ item }: { item: TreeItem }) => {
    switch (item.kind) {
        case "root":
            return (
                <TreeRow>
                    <ExpanderCell><Expander $ml={1} /></ExpanderCell>
                    <TreeIconCell><IcoViewsTree /></TreeIconCell>
                    <TreeLabel>{item.label}</TreeLabel>
                </TreeRow>
            );
        case "legend":
            return (
                <TreeRow>
                    <GuideCell $line="4px" />
                    <TreeIconCell><IcoLegend /></TreeIconCell>
                    <TreeLabel>{item.label}</TreeLabel>
                </TreeRow>
            );
        case "schedule":
            return (
                <TreeRow>
                    <ExpanderCell><Expander $ml={1} /></ExpanderCell>
                    <TreeIconCell><IcoSchedule /></TreeIconCell>
                    <TreeLabel>{item.label}</TreeLabel>
                </TreeRow>
            );
        case "group":
            return (
                <TreeRow>
                    <GuideCell $line="4px" />
                    <ExpanderCell><Expander $ml={1} /></ExpanderCell>
                    <TreeLabel $ml={2}>{item.label}</TreeLabel>
                </TreeRow>
            );
        case "leaf":
            return (
                <TreeRow>
                    <GuideCell $line="4px" />
                    <GuideCell $line="4px" $elbow />
                    <TreeLabel $ml={2}>{item.label}</TreeLabel>
                </TreeRow>
            );
        default:
            return (
                <TreeRow>
                    <GuideCell $line="4px" />
                    <GuideCell $line="4px" />
                    <GuideCell $line="4px" $elbow />
                    <TreeLabel $ml={2} $active={item.active}>{item.label}</TreeLabel>
                </TreeRow>
            );
    }
};

// floor plan pieces, in page pixels: x, y, w, h
type Box = [number, number, number, number];

const STEPS_DARK: Box[] = [
    [471, 243, 8, 45], [480, 289, 9, 38], [489, 318, 10, 28], [499, 337, 9, 28],
    [508, 366, 9, 17], [517, 375, 10, 18], [527, 384, 9, 18], [537, 403, 9, 14],
    [546, 413, 10, 10], [557, 423, 18, 7], [565, 423, 10, 17], [575, 442, 28, 8],
    [593, 450, 19, 9], [603, 459, 37, 9], [631, 468, 9, 9], [640, 470, 29, 7],
];

const STEPS_LIGHT: Box[] = [
    [716, 239, 9, 238], [716, 239, 19, 13], [735, 253, 19, 8], [745, 261, 9, 10],
    [754, 271, 19, 9], [763, 280, 19, 9], [782, 289, 19, 10], [792, 299, 9, 10],
    [801, 309, 19, 9], [811, 318, 18, 10], [820, 328, 19, 9], [839, 337, 9, 18],
    [848, 347, 9, 8], [857, 356, 19, 9], [867, 365, 9, 9], [876, 375, 19, 9],
    [887, 384, 11, 9],
    [942, 233, 65, 10], [1019, 233, 18, 10], [1047, 233, 18, 10], [1075, 233, 9, 10],
    [938, 422, 4, 8], [943, 432, 18, 8], [952, 440, 9, 9], [961, 451, 19, 8],
    [971, 459, 9, 9], [981, 469, 18, 9], [945, 479, 62, 9], [1019, 479, 18, 9],
    [1047, 479, 18, 9], [1075, 479, 9, 9], [1000, 488, 26, 9], [1028, 497, 9, 19],
    [1037, 507, 9, 9], [1047, 517, 9, 18], [1056, 526, 9, 9], [1066, 535, 9, 18],
    [1075, 544, 9, 9],
];

const BLACK: Box[] = [
    [281, 171, 19, 5], [300, 177, 9, 9], [310, 186, 9, 9], [319, 195, 10, 2],
    [338, 238, 560, 4], [896, 171, 2, 26], [940, 171, 3, 69], [941, 478, 3, 90],
    [688, 519, 210, 6], [895, 525, 3, 40], [697, 525, 9, 10], [706, 535, 9, 9],
    [715, 544, 10, 10], [725, 554, 10, 10], [735, 564, 163, 8], [941, 564, 143, 8],
];

const DASHES: Box[] = [
    [182, 602, 15, 9], [207, 602, 26, 9], [243, 602, 30, 9], [282, 602, 37, 9],
    [329, 602, 28, 9], [367, 602, 27, 9], [405, 602, 27, 9], [452, 602, 27, 9],
    [489, 602, 28, 9], [527, 602, 28, 9], [575, 602, 27, 9], [612, 602, 28, 9],
    [650, 592, 28, 9],
];

const RED_SQUARES: Box[] = Array.from({ length: 27 }, (_, i): Box => {
    const x = 311 + i * 9.6;
    return [x, 243 + (x - 311) * 0.87, 9, 8.600];
}).concat([
    [338, 274, 18, 9], [414, 337, 18, 10], [490, 403, 19, 10],
] as Box[]);

const boxes = (items: Box[], fill: string) =>
    items.map(([x, y, w, h], i) => <rect key={i} x={x} y={y} width={w} height={h} fill={fill} />);

const FloorPlan = () => (
    <DrawingSvg width={902} height={537} viewBox="182 150 902 537">
        <rect x="182" y="150" width="902" height="537" fill="#fff" />

        {/* rooms behind the wall fill */}
        <rect x="258" y="171" width="640" height="26" fill="#f3eff3" />
        <polygon points="338,240 898,240 898,478 610,478" fill="#f1f1f1" />
        <polygon points="659,519 898,519 898,580 728,580" fill="#f1f1f1" />
        <rect x="735" y="572" width="163" height="8" fill="#fafafa" />
        <rect x="939" y="171" width="145" height="409" fill="#f1f1f1" />
        <rect x="941" y="572" width="143" height="8" fill="#fafafa" />
        <polygon points="761,608 1084,608 1084,687 851,687" fill="#f3f1f4" />
        {boxes(STEPS_DARK, "#7a7a7a")}
        {boxes(STEPS_LIGHT, "#9c9c9c")}
        {boxes(BLACK, "#000")}

        {/* walls */}
        <g fill="#7b00ff">
            <rect x="182" y="150" width="902" height="21" />
            <rect x="290" y="197" width="649" height="41" />
            <rect x="898" y="150" width="41" height="458" />
            <rect x="600" y="477" width="339" height="42" />
            <rect x="720" y="580" width="364" height="28" />
            <polygon points="182,150 182,160 788,687 851,687 258,171 240,150" />
        </g>

        {/* opening */}
        <polygon points="267,235 295,203 583,454 556,486" fill="#f0717e" stroke="#a3222f" strokeWidth="0.7" />
        <polygon points="267,235 295,203 338,239 272,239" fill="#c7197f" />
        {boxes(RED_SQUARES, "#ab2433")}

        {boxes(DASHES, "#6f6f6f")}

        <path d="M183 432L475 687" stroke="#666" strokeWidth="0.6" />
        <g stroke="#8f94c4" strokeWidth="0.8">
            <path d="M237 270L525 521" />
            <path d="M254 250L233 273M543 501L522 525" />
            <path d="M232 270h8M520 521h8" />
            <path d="M369 405h8M369 402.500v5M377 402.500v5" stroke="#667" />
        </g>
        <text
            x="390"
            y="390"
            transform="rotate(41 390 386)"
            textAnchor="middle"
            fontFamily={FONT}
            fontSize="11.500"
            fill="#2f3f95"
        >
            2800.0
        </text>

        {/* cursor */}
        <path d="M697 416v10l2.300-2 1.700 3.500 1.300-.7-1.700-3.300H703z" fill="#fff" stroke="#333" strokeWidth="0.7" />

        {/* view window buttons */}
        <path d="M1052 159h6" stroke="#ddd" strokeWidth="2" />
        <path d="M1063.500 156h6v6h-6z" stroke="#ddd" strokeWidth="1.300" />
        <path d="M1075 155l6 6M1081 155l-6 6" stroke="#fff" strokeWidth="2" />

        {/* navigation bar */}
        <rect x="1063" y="170" width="21" height="70" fill="#f1f1f1" fillOpacity="0.8" stroke="#aaa" />
        <circle cx="1072" cy="187" r="5" stroke="#c4c4c4" fill="#f2f2f2" />
        <circle cx="1072" cy="187" r="2.500" stroke="#c4c4c4" fill="none" />
        <rect x="1068" y="210" width="7" height="7" fill="#c6d2b6" stroke="#9aa98b" />
        <circle cx="1077" cy="216" r="2" stroke="#aaa" fill="none" />
        <circle cx="1079" cy="237" r="1.500" stroke="#666" fill="none" />
    </DrawingSvg>
);

const App = () => (
    <Page>
        <GlobalStyle />
        <TopBar>
            <AppButton>
                <AppButtonFace>
                    <AppLetter>R</AppLetter>
                    <Caret $c="#222" />
                </AppButtonFace>
            </AppButton>
            <TitleColumn>
                <TitleRow>
                    <TitleText>{"Autodesk Revit 2017 - STUDENT VERSION -    WINDOWS DOORS.rvt - Floor Plan: Level 1"}</TitleText>
                    <SearchArrow />
                    <SearchBox>Type a keyword or phrase</SearchBox>
                    <InfoCenter>
                        <InfoSlot $w={18}><IcoBinoc /></InfoSlot>
                        <InfoSlot $w={19}><IcoDish /></InfoSlot>
                        <InfoSlot $w={18}><IcoStar /></InfoSlot>
                        <InfoSlot $w={18}><IcoUser /></InfoSlot>
                        <InfoSlot $w={66}>Sign In</InfoSlot>
                        <InfoSlot $w={12}><Caret /></InfoSlot>
                        <InfoSlot $w={27}><IcoExchange /></InfoSlot>
                        <InfoSlot $w={18}><IcoHelp /></InfoSlot>
                        <InfoSlot $w={5}><Caret /></InfoSlot>
                    </InfoCenter>
                    <WindowButtons>
                        <WindowBtn $w={24}><IcoMin /></WindowBtn>
                        <WindowBtn $w={22}><IcoRestore /></WindowBtn>
                        <WindowBtn $w={35} $danger><IcoCloseWhite /></WindowBtn>
                    </WindowButtons>
                </TitleRow>
                <TabRow>
                    <Tab>Architecture</Tab>
                    <Tab>Structure</Tab>
                    <Tab>Insert</Tab>
                    <Tab>Annotate</Tab>
                    <Tab>Analyze</Tab>
                    <Tab>Massing &amp; Site</Tab>
                    <Tab>Collaborate</Tab>
                    <Tab>View</Tab>
                    <Tab>Manage</Tab>
                    <Tab>Add-Ins</Tab>
                    <Tab>ArchVision</Tab>
                    <ActiveTab>Modify | Rectangular Straight Wall Opening</ActiveTab>
                    <ContextCollapse>
                        <PillIcon />
                        <Caret $c="#222" />
                    </ContextCollapse>
                </TabRow>
            </TitleColumn>
        </TopBar>

        <Ribbon>
            <Panel $w={47}>
                <PanelBody>
                    <ModifyButton>
                        <IcoCursor />
                        Modify
                    </ModifyButton>
                </PanelBody>
                <PanelLabel>Select <Caret /></PanelLabel>
            </Panel>
            <Panel $w={48}>
                <PanelBody>
                    <PropsStack>
                        <IcoTypeFaded />
                        <SelectedTool><IcoTypeProps /></SelectedTool>
                    </PropsStack>
                </PanelBody>
                <PanelLabel>Properties</PanelLabel>
            </Panel>
            <Panel $w={108}>
                <PanelBody>
                    <ToolGrid $cols="55px 20px 32px" $pl={4}>
                        <ToolCell><IcoCope /> Cope <Caret $m={6} /></ToolCell>
                        <ToolCell><IcoFadedDoc /></ToolCell>
                        <ToolCell><IcoBlueBook /></ToolCell>
                        <ToolCell><IcoCut /> Cut <Caret $m={6} /></ToolCell>
                        <ToolCell><IcoSplit /></ToolCell>
                        <ToolCell><IcoGeomPair /><Caret $m={1} /></ToolCell>
                        <ToolCell><IcoJoin /> Join <Caret $m={6} /></ToolCell>
                        <ToolCell><IcoPaint /></ToolCell>
                        <ToolCell><IcoWand /></ToolCell>
                    </ToolGrid>
                </PanelBody>
                <PanelLabel>Geometry</PanelLabel>
            </Panel>
            <Panel $w={62}>
                <PanelBody>
                    <PasteStack>
                        <IcoClipFaded />
                        Paste
                        <Caret $c="#888" />
                    </PasteStack>
                    <SmallColumn>
                        <SmallSlot><IcoScissors /></SmallSlot>
                        <SmallSlot><IcoCopy /></SmallSlot>
                        <SmallSlot><IcoMatch /></SmallSlot>
                    </SmallColumn>
                </PanelBody>
                <PanelLabel>Clipboard</PanelLabel>
            </Panel>
            <Panel $w={188}>
                <PanelBody>
                    <ToolGrid $cols="31px 31px 31px 31px" $pl={4} $pt={2} $rows="28px">
                        <ToolCell><IcoAlign /></ToolCell>
                        <ToolCell><IcoOffset /></ToolCell>
                        <ToolCell><IcoMirrorPick /></ToolCell>
                        <ToolCell><IcoMirrorDraw /></ToolCell>
                        <ToolCell><IcoMove /></ToolCell>
                        <ToolCell><IcoCopyMove /></ToolCell>
                        <ToolCell><IcoRotate /></ToolCell>
                        <ToolCell><IcoTrim /></ToolCell>
                    </ToolGrid>
                    <ToolGrid $cols="20px 19px 19px" $pl={1}>
                        <ToolCell><IcoTwin /></ToolCell>
                        <ToolCell><IcoTwin $c="#8ab4d6" /></ToolCell>
                        <ToolCell><IcoFadedCross /></ToolCell>
                        <ToolCell><IcoArray /></ToolCell>
                        <ToolCell><IcoScale /></ToolCell>
                        <ToolCell><IcoUnpin /></ToolCell>
                        <ToolCell><IcoTrimSmall /></ToolCell>
                        <ToolCell><IcoExtend /></ToolCell>
                        <ToolCell><IcoRedX /></ToolCell>
                    </ToolGrid>
                </PanelBody>
                <PanelLabel>Modify</PanelLabel>
            </Panel>
            <Panel $w={50}>
                <PanelBody>
                    <ToolGrid $cols="28px 18px" $pl={3}>
                        <ToolCell $gap={4}><IcoBulb /><Caret /></ToolCell>
                        <ToolCell><IcoBox3d /></ToolCell>
                        <ToolCell $gap={2}><IcoBrush /><Caret /></ToolCell>
                        <ToolCell><IcoLines /></ToolCell>
                        <ToolCell><IcoBars /></ToolCell>
                        <Divider />
                    </ToolGrid>
                </PanelBody>
                <PanelLabel>View</PanelLabel>
            </Panel>
            <Panel $w={43}>
                <PanelBody>
                    <ToolGrid $cols="1fr" $pl={3} $pt={2} $rows="28px">
                        <ToolCell><IcoRuler /><Caret /></ToolCell>
                        <ToolCell><IcoDimDiag /><Caret /></ToolCell>
                    </ToolGrid>
                </PanelBody>
                <PanelLabel>Measure</PanelLabel>
            </Panel>
            <Panel $w={64}>
                <PanelBody>
                    <ToolGrid $cols="33px 28px" $pl={2} $pt={2} $rows="29px">
                        <ToolCell><IcoCreateFaded /></ToolCell>
                        <ToolCell><IcoCreateGroup /></ToolCell>
                        <ToolCell><IcoFolderBox /></ToolCell>
                        <ToolCell><IcoFlow /></ToolCell>
                    </ToolGrid>
                </PanelBody>
                <PanelLabel>Create</PanelLabel>
            </Panel>
        </Ribbon>

        <Qat>
            {QAT_ITEMS.map((item, i) => (
                <QatSlot key={i} $w={item.w}>{item.node}</QatSlot>
            ))}
        </Qat>
        <OptionsBar>Modify | Rectangular Straight Wall Opening</OptionsBar>

        <Main>
            <SidePanel>
                <PanelTitle>Properties <IcoPanelX /></PanelTitle>
                <Preview>
                    <PreviewLogo>R</PreviewLogo>
                    <Caret $c="#999" />
                </Preview>
                <TypeRow>
                    <TypeSelect>
                        <TypeName>Rectangular Straight W:</TypeName>
                        <IcoChevDown />
                    </TypeSelect>
                    <EditType><IcoEditType /> Edit Type</EditType>
                </TypeRow>
                <GroupHeader>Constraints <IcoDoubleUp /></GroupHeader>
                <PropRow><PropName>Top Offset</PropName><PropValue $active>-1000.0</PropValue><PropEdge /></PropRow>
                <PropRow><PropName>Base Offset</PropName><PropValue>0.0</PropValue><PropEdge /></PropRow>
                <PropRow><PropName $muted>Unconnected Hei...</PropName><PropValue $muted>2590.0</PropValue><PropEdge /></PropRow>
                <PropRow><PropName>Base Constraint</PropName><PropValue>Level 1</PropValue><PropEdge /></PropRow>
                <PropRow><PropName>Top Constraint</PropName><PropValue>Up to level: Level 2</PropValue><PropEdge /></PropRow>
                <GroupHeader>Phasing <IcoDoubleUp /></GroupHeader>
                <PropRow><PropName $muted>Phase Created</PropName><PropValue $muted>New Construction</PropValue><PropEdge /></PropRow>
                <PropRow><PropName $muted>Phase Demolished</PropName><PropValue $muted>None</PropValue><PropEdge /></PropRow>
                <SidePanelSpacer />
                <HelpRow>
                    <HelpLink>Properties help</HelpLink>
                    <ApplyButton>Apply</ApplyButton>
                </HelpRow>
            </SidePanel>
            <Gutter />
            <CanvasColumn>
                <CanvasRow>
                    <Drawing><FloorPlan /></Drawing>
                    <ScrollTrack>
                        <IcoChevUp />
                        <ScrollThumbV />
                        <IcoChevDown $c="#555" />
                    </ScrollTrack>
                </CanvasRow>
                <ViewBar>
                    <ViewControls>
                        <ViewScale>1 : 96</ViewScale>
                        {VIEW_ICONS.map((icon, i) => <ViewIcon key={i}>{icon}</ViewIcon>)}
                        <IcoChevLeft />
                    </ViewControls>
                    <HScrollTrack>
                        <HThumb />
                        <IcoChevRight />
                    </HScrollTrack>
                </ViewBar>
            </CanvasColumn>
            <BrowserGutter />
            <SidePanel>
                <PanelTitle>Project Browser - WINDOWS DOORS.rvt <IcoPanelX /></PanelTitle>
                <Tree>
                    <TreeList>
                        {TREE.map((item) => <TreeNode key={item.label} item={item} />)}
                    </TreeList>
                    <BrowserScroll>
                        <IcoChevUp />
                        <BrowserThumb />
                        <IcoChevDown $c="#555" />
                    </BrowserScroll>
                </Tree>
                <BrowserHScroll>
                    <IcoChevLeft />
                    <BrowserHThumb />
                    <IcoChevRight />
                </BrowserHScroll>
            </SidePanel>
        </Main>

        <StatusBar>
            <StatusText>Raster Images : Raster image : Plan 01.jpg</StatusText>
            <StatusSlot $w={16}><MiniHouse /></StatusSlot>
            <StatusCombo $w={160}><span /><IcoChevDown $c="#999" /></StatusCombo>
            <StatusSlot $w={5} />
            <StatusSlot $w={33}><MiniFilterBox /><CountLabel>:0</CountLabel></StatusSlot>
            <StatusSlot $w={5} />
            <StatusSlot $w={20}><MiniDoc /></StatusSlot>
            <StatusSlot $w={16}><MiniGrey /></StatusSlot>
            <StatusCombo $w={120}>Main Model<IcoChevDown $c="#999" /></StatusCombo>
            <StatusSlot $w={166} />
            <StatusSlot $w={18}><StatusBulb /></StatusSlot>
            <StatusSlot $w={19}><StatusLinkX /></StatusSlot>
            <StatusSlot $w={19}><StatusPin /></StatusSlot>
            <StatusSlot $w={19}><StatusFaceX /></StatusSlot>
            <StatusSlot $w={16}><StatusDrag /></StatusSlot>
            <StatusSlot $w={15}><StatusGear /></StatusSlot>
            <StatusSlot $w={22}><StatusFilter /><CountLabel>:1</CountLabel></StatusSlot>
        </StatusBar>
    </Page>
);

export default App;
